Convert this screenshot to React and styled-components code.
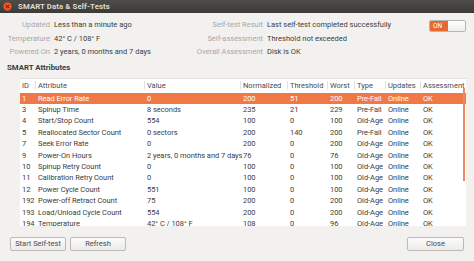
import React from 'react';
import styled, { createGlobalStyle } from 'styled-components';

const GlobalStyle = createGlobalStyle`
  html, body {
    margin: 0;
    padding: 0;
    background: #f2f1f0;
  }
  body {
    font-family: Roboto, "Liberation Sans", sans-serif;
    color: #3c3c3c;
  }
`;

const info = [
  ['Updated', 'Less than a minute ago'],
  ['Temperature', '42° C / 108° F'],
  ['Powered On', '2 years, 0 months and 7 days'],
];

const info2 = [
  ['Self-test Result', 'Last self-test completed successfully'],
  ['Self-assessment', 'Threshold not exceeded'],
  ['Overall Assessment', 'Disk is OK'],
];

const columns = ['ID', 'Attribute', 'Value', 'Normalized', 'Threshold', 'Worst', 'Type', 'Updates', 'Assessment'];

const rows = [
  ['1', 'Read Error Rate', '0', '200', '51', '200', 'Pre-Fail', 'Online', 'OK'],
  ['3', 'Spinup Time', '8 seconds', '235', '21', '229', 'Pre-Fail', 'Online', 'OK'],
  ['4', 'Start/Stop Count', '554', '100', '0', '100', 'Old-Age', 'Online', 'OK'],
  ['5', 'Reallocated Sector Count', '0 sectors', '200', '140', '200', 'Pre-Fail', 'Online', 'OK'],
  ['7', 'Seek Error Rate', '0', '200', '0', '200', 'Old-Age', 'Online', 'OK'],
  ['9', 'Power-On Hours', '2 years, 0 months and 7 days', '76', '0', '76', 'Old-Age', 'Online', 'OK'],
  ['10', 'Spinup Retry Count', '0', '100', '0', '100', 'Old-Age', 'Online', 'OK'],
  ['11', 'Calibration Retry Count', '0', '100', '0', '100', 'Old-Age', 'Online', 'OK'],
  ['12', 'Power Cycle Count', '551', '100', '0', '100', 'Old-Age', 'Online', 'OK'],
  ['192', 'Power-off Retract Count', '75', '200', '0', '200', 'Old-Age', 'Online', 'OK'],
  ['193', 'Load/Unload Cycle Count', '554', '200', '0', '200', 'Old-Age', 'Online', 'OK'],
  ['194', 'Temperature', '42° C / 108° F', '108', '0', '96', 'Old-Age', 'Online', 'OK'],
];

const cols = '16px 109px 96px 47px 40px 27px 31px 35px 42px';

const SmartDialog = () => (
  <Window>
    <GlobalStyle />
    <TitleBar>
      <CloseDot>
        <svg width="9" height="9" viewBox="0 0 9 9">
          <circle cx="4.5" cy="4.5" r="4.2" fill="#e2562b" />
          <path d="M3 3 L6 6 M6 3 L3 6" stroke="#3a1a10" strokeWidth="1" />
        </svg>
      </CloseDot>
      <Title>SMART Data &amp; Self-Tests</Title>
    </TitleBar>

    <Content>
      <InfoArea>
        <InfoGrid $label="43px">
          {info.map(([k, v]) => (
            <React.Fragment key={k}>
              <Label>{k}</Label>
              <Value>{v}</Value>
            </React.Fragment>
          ))}
        </InfoGrid>
        <InfoGrid $label="67px">
          {info2.map(([k, v]) => (
            <React.Fragment key={k}>
              <Label>{k}</Label>
              <Value>{v}</Value>
            </React.Fragment>
          ))}
        </InfoGrid>
        <Switch>
          <SwitchOn>ON</SwitchOn>
          <SwitchKnob />
        </Switch>
      </InfoArea>

      <SectionTitle>SMART Attributes</SectionTitle>

      <TableBox>
        <HeaderRow>
          {columns.map((c) => (
            <HeadCell key={c}>{c}</HeadCell>
          ))}
        </HeaderRow>
        <Rows>
          {rows.map((r, i) => (
            <Row key={r[0]} $selected={i === 0}>
              {r.map((cell, j) => (
                <Cell key={j}>{cell}</Cell>
              ))}
            </Row>
          ))}
        </Rows>
        <ScrollThumb />
      </TableBox>

      <ButtonRow>
        <Button>Start Self-test</Button>
        <Button>Refresh</Button>
        <Spacer />
        <Button>Close</Button>
      </ButtonRow>
    </Content>
  </Window>
);

const Window = styled.div`
  width: 474px;
  height: 261px;
  display: flex;
  flex-direction: column;
  background: #f2f1f0;
  overflow: hidden;
`;

const TitleBar = styled.div`
  height: 13px;
  flex: none;
  display: flex;
  align-items: center;
  gap: 6px;
  padding-left: 3px;
  background: linear-gradient(#4d4c48, #3c3b37);
`;

const CloseDot = styled.div`
  width: 9px;
  height: 9px;
  display: flex;
`;

const Title = styled.div`
  font-size: 7.8px;
  font-weight: bold;
  color: #dfdbd2;
  letter-spacing: 0.1px;
`;

const Content = styled.div`
  flex: 1;
  display: flex;
  flex-direction: column;
  padding: 5px 8px 0 7px;
`;

const InfoArea = styled.div`
  display: flex;
  align-items: flex-start;
`;

const InfoGrid = styled.div`
  display: grid;
  grid-template-columns: ${(p) => p.$label} auto;
  column-gap: 4px;
  grid-auto-rows: 13.5px;
  align-items: center;
  &:first-child {
    width: 189px;
  }
`;

const Label = styled.div`
  font-size: 7.5px;
  color: #a8a8a8;
  text-align: right;
  white-space: nowrap;
`;

const Value = styled.div`
  font-size: 7.5px;
  color: #3c3c3c;
  white-space: nowrap;
`;

const Switch = styled.div`
  margin-left: auto;
  margin-top: 2px;
  width: 35px;
  height: 10px;
  display: flex;
  border: 1px solid #b8b4ae;
  border-radius: 2px;
  overflow: hidden;
`;

const SwitchOn = styled.div`
  width: 18px;
  background: #e6692f;
  color: #fff;
  font-size: 6.5px;
  line-height: 10px;
  padding-left: 3px;
  box-sizing: border-box;
`;

const SwitchKnob = styled.div`
  flex: 1;
  background: linear-gradient(#ffffff, #eeeeee);
`;

const SectionTitle = styled.div`
  font-size: 7.8px;
  font-weight: bold;
  color: #3c3c3c;
  margin-top: 3px;
  height: 12px;
  line-height: 12px;
`;

const TableBox = styled.div`
  position: relative;
  margin: 4px 0 0 13px;
  width: 446px;
  height: 147px;
  background: #ffffff;
  border-top: 1px solid #e2e0dd;
  overflow: hidden;
`;

const HeaderRow = styled.div`
  display: grid;
  grid-template-columns: ${cols};
  height: 14px;
  align-items: center;
`;

const HeadCell = styled.div`
  font-size: 7.5px;
  color: #4a4a4a;
  padding-left: 2px;
  white-space: nowrap;
  border-right: 1px solid #e4e2df;
  height: 9px;
  line-height: 9px;
  &:last-child {
    border-right: none;
  }
`;

const Rows = styled.div`
  display: flex;
  flex-direction: column;
`;

const Row = styled.div`
  display: grid;
  grid-template-columns: ${cols};
  height: 11.4px;
  align-items: center;
  background: ${(p) => (p.$selected ? '#f07746' : 'transparent')};
  color: ${(p) => (p.$selected ? '#ffffff' : '#3c3c3c')};
`;

const Cell = styled.div`
  font-size: 7.5px;
  padding-left: 2px;
  white-space: nowrap;
  letter-spacing: -0.05px;
`;

const ScrollThumb = styled.div`
  position: absolute;
  right: 1px;
  top: 9px;
  width: 2px;
  height: 93px;
  background: #e98a63;
`;

const ButtonRow = styled.div`
  display: flex;
  gap: 4px;
  margin-top: 11px;
  padding-left: 3px;
  padding-right: 2px;
`;

const Spacer = styled.div`
  flex: 1;
`;

const Button = styled.button`
  width: 56px;
  height: 14px;
  padding: 0;
  font-family: Roboto, "Liberation Sans", sans-serif;
  font-size: 7.5px;
  color: #4a4a4a;
  background: linear-gradient(#fbfbfb, #ebebea);
  border: 1px solid #bdbab5;
  border-radius: 2px;
  &:last-child {
    width: 57px;
  }
`;

export default SmartDialog;
